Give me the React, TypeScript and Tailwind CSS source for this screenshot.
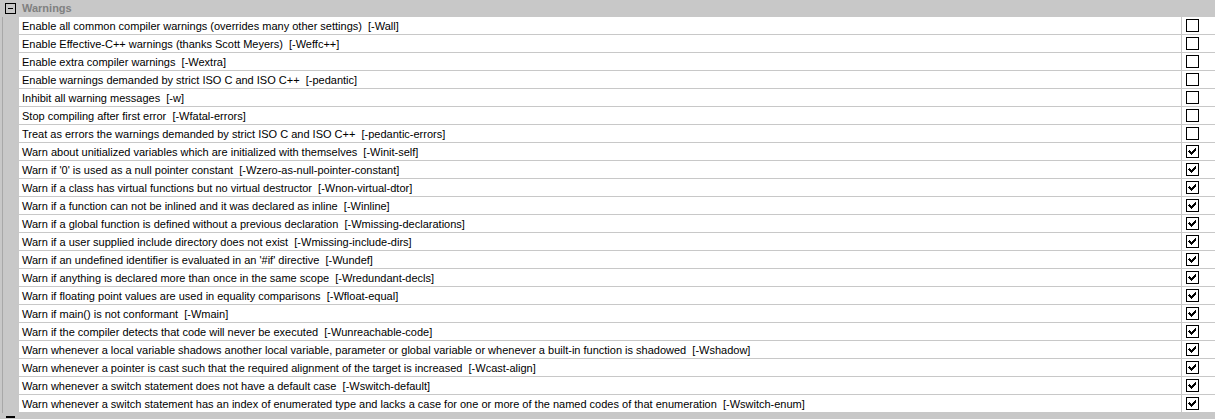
import React from 'react';

type Opt = { label: string; on: boolean };

const options: Opt[] = [
  { label: 'Enable all common compiler warnings (overrides many other settings)  [-Wall]', on: false },
  { label: 'Enable Effective-C++ warnings (thanks Scott Meyers)  [-Weffc++]', on: false },
  { label: 'Enable extra compiler warnings  [-Wextra]', on: false },
  { label: 'Enable warnings demanded by strict ISO C and ISO C++  [-pedantic]', on: false },
  { label: 'Inhibit all warning messages  [-w]', on: false },
  { label: 'Stop compiling after first error  [-Wfatal-errors]', on: false },
  { label: 'Treat as errors the warnings demanded by strict ISO C and ISO C++  [-pedantic-errors]', on: false },
  { label: 'Warn about unitialized variables which are initialized with themselves  [-Winit-self]', on: true },
  { label: "Warn if '0' is used as a null pointer constant  [-Wzero-as-null-pointer-constant]", on: true },
  { label: 'Warn if a class has virtual functions but no virtual destructor  [-Wnon-virtual-dtor]', on: true },
  { label: 'Warn if a function can not be inlined and it was declared as inline  [-Winline]', on: true },
  { label: 'Warn if a global function is defined without a previous declaration  [-Wmissing-declarations]', on: true },
  { label: 'Warn if a user supplied include directory does not exist  [-Wmissing-include-dirs]', on: true },
  { label: "Warn if an undefined identifier is evaluated in an '#if' directive  [-Wundef]", on: true },
  { label: 'Warn if anything is declared more than once in the same scope  [-Wredundant-decls]', on: true },
  { label: 'Warn if floating point values are used in equality comparisons  [-Wfloat-equal]', on: true },
  { label: 'Warn if main() is not conformant  [-Wmain]', on: true },
  { label: 'Warn if the compiler detects that code will never be executed  [-Wunreachable-code]', on: true },
  { label: 'Warn whenever a local variable shadows another local variable, parameter or global variable or whenever a built-in function is shadowed  [-Wshadow]', on: true },
  { label: 'Warn whenever a pointer is cast such that the required alignment of the target is increased  [-Wcast-align]', on: true },
  { label: 'Warn whenever a switch statement does not have a default case  [-Wswitch-default]', on: true },
  { label: 'Warn whenever a switch statement has an index of enumerated type and lacks a case for one or more of the named codes of that enumeration  [-Wswitch-enum]', on: true },
];

const CheckBox: React.FC<{ on: boolean }> = ({ on }) => (
  <div className="w-[13px] h-[13px] border border-black bg-white flex items-center justify-center">
    {on && (
      <svg width="11" height="11" viewBox="0 0 11 11" shapeRendering="crispEdges">
        <path d="M2 4h1v1h1v1h1v-1h1v-1h1v-1h1v-1h1v3h-1v1h-1v1h-1v1h-1v1h-1v-1h-1v-1h-1v-1h-1z" fill="black" />
      </svg>
    )}
  </div>
);

export default function App() {
  return (
    <div className="w-[1215px] h-[419px] overflow-hidden bg-[#c8c8c8] text-[11px] font-['Liberation_Sans',sans-serif] text-black">
      {/* category header */}
      <div className="h-[17px] flex items-center">
        <div className="w-[19px] flex justify-center pl-[1px]">
          <div className="w-[11px] h-[11px] border border-black flex items-center justify-center">
            <div className="w-[5px] h-px bg-black"></div>
          </div>
        </div>
        <span className="pl-[3px] font-bold text-[#808080]">Warnings</span>
      </div>

      <div className="flex">
        <div className="w-[19px] shrink-0 pl-[2px]">
          <div className="w-px h-full bg-[#a8a8a8]"></div>
        </div>
        <div className="flex-1 bg-white">
          {options.map((o) => (
            <div key={o.label} className="flex h-[18px] border-b border-[#c8c8c8]">
              <div className="flex-1 pl-[3px] pt-[1px] leading-[16px] whitespace-pre overflow-hidden">
                {o.label}
              </div>
              <div className="w-[34px] border-l border-[#c8c8c8] flex items-center pl-[4px]">
                <CheckBox on={o.on} />
              </div>
            </div>
          ))}
        </div>
      </div>

      <div className="h-[5px] flex">
        <div className="w-[19px] pl-[6px] pt-[3px]">
          <div className="w-[9px] h-[2px] bg-black"></div>
        </div>
      </div>
    </div>
  );
}
